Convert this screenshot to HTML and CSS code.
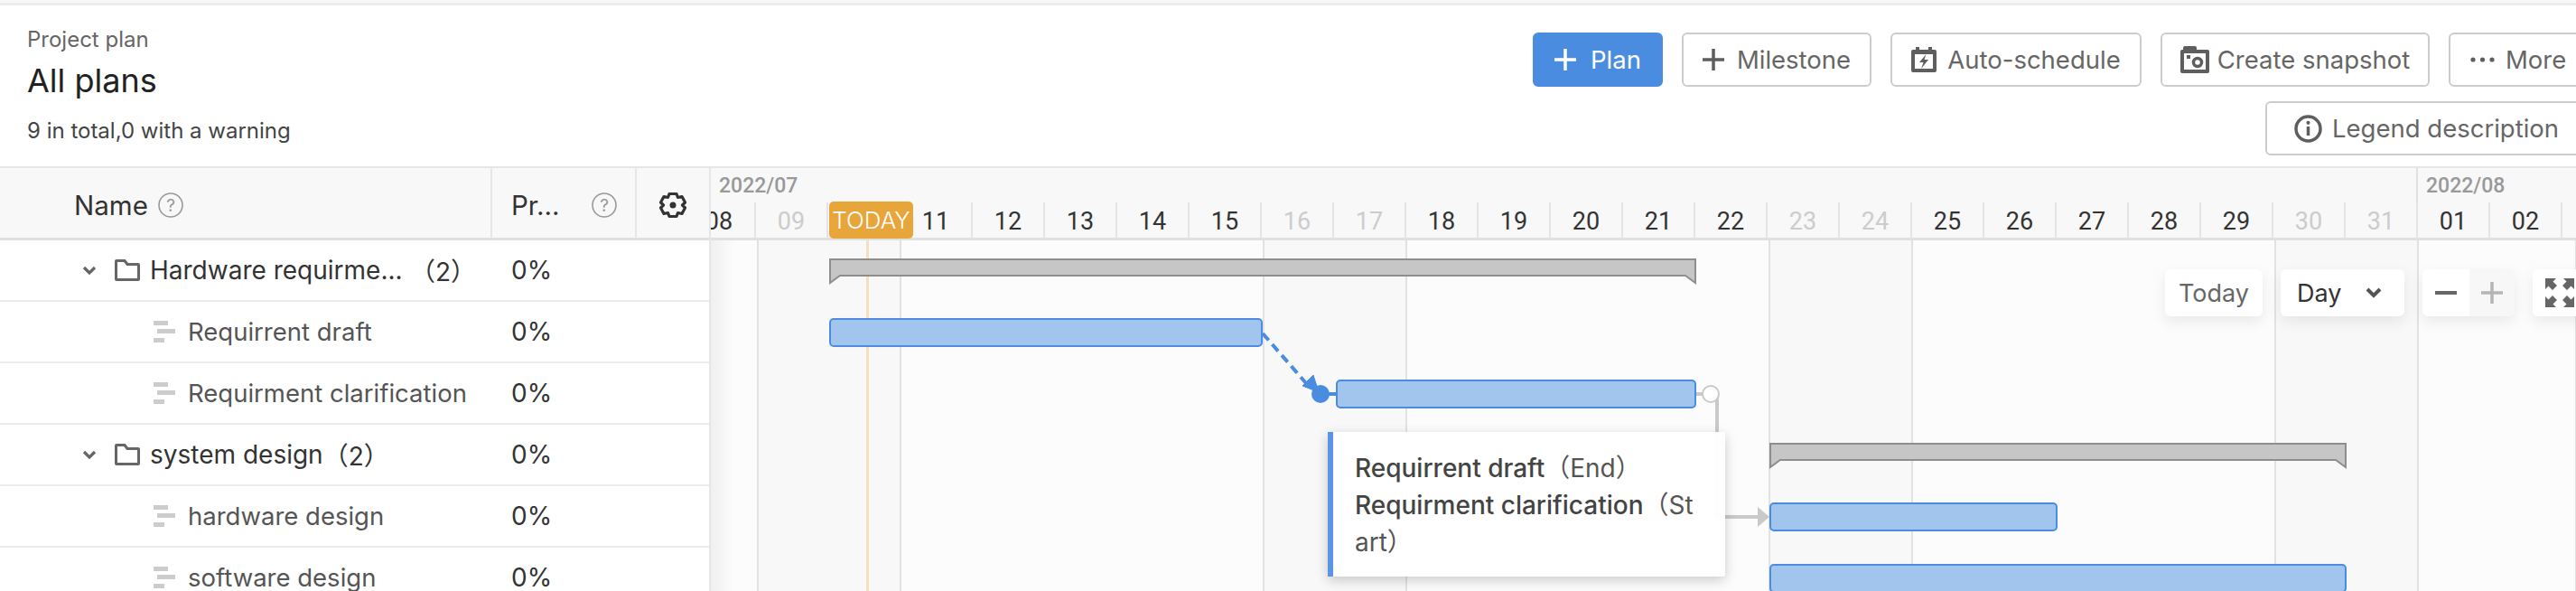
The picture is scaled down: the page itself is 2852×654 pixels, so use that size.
FILE: index.html
```html
<!DOCTYPE html>
<html lang="en">
<head>
    <meta charset="UTF-8">
    <title>Project plan</title>
    <link rel="stylesheet" href="styles.css">
</head>
<body>
    <div class="top-strip"></div>
    <div class="page-head">
        <div class="head-text">
            <div class="crumb">Project plan</div>
            <h1>All plans</h1>
            <div class="summary">9 in total,0 with a warning</div>
        </div>
        <div class="actions">
            <div class="btn-row">
                <button class="btn primary btn-plan">
                    <svg width="24" height="24" viewBox="0 0 24 24"><path d="M12 0v24M0 12h24" stroke="#fff" stroke-width="3.5" fill="none"/></svg>
                    Plan
                </button>
                <button class="btn btn-milestone">
                    <svg width="24" height="24" viewBox="0 0 24 24"><path d="M12 0v24M0 12h24" stroke="#5e5e5e" stroke-width="3.5" fill="none"/></svg>
                    Milestone
                </button>
                <button class="btn btn-auto">
                    <svg width="28" height="28" viewBox="0 0 28 28"><path d="M5 0h4v3h10V0h4v3h3a2 2 0 0 1 2 2v21a2 2 0 0 1-2 2H2a2 2 0 0 1-2-2V5a2 2 0 0 1 2-2h3zM4 8v16h20V8z" fill="#5e5e5e"/><path d="M16.500 8L9 17h4.500L11 24l8-10h-4.500z" fill="#5e5e5e"/></svg>
                    Auto-schedule
                </button>
                <button class="btn btn-snapshot">
                    <svg width="32" height="30" viewBox="0 0 32 30"><path d="M5 0h11a2 2 0 0 1 2 2v2h12a2 2 0 0 1 2 2v22a2 2 0 0 1-2 2H2a2 2 0 0 1-2-2V6a2 2 0 0 1 2-2h1V2a2 2 0 0 1 2-2zM4 8v18h24V8z" fill="#5e5e5e"/><circle cx="19" cy="18" r="4.500" fill="none" stroke="#5e5e5e" stroke-width="3.500"/><path d="M7 10h4v4H7z" fill="#5e5e5e"/></svg>
                    Create snapshot
                </button>
                <button class="btn btn-more">
                    <svg width="27" height="6" viewBox="0 0 27 6"><circle cx="3" cy="3" r="2.600" fill="#5e5e5e"/><circle cx="13.500" cy="3" r="2.600" fill="#5e5e5e"/><circle cx="24" cy="3" r="2.600" fill="#5e5e5e"/></svg>
                    More
                </button>
            </div>
            <div class="btn-row legend-row">
                <button class="btn btn-legend">
                    <svg width="31" height="31" viewBox="0 0 31 31"><circle cx="15.500" cy="15.500" r="13.500" fill="none" stroke="#5e5e5e" stroke-width="3.500"/><path d="M15.500 13v10" stroke="#5e5e5e" stroke-width="3.500"/><circle cx="15.500" cy="8.800" r="2.100" fill="#5e5e5e"/></svg>
                    Legend description
                </button>
            </div>
        </div>
    </div>

    <div class="gantt">
        <div class="task-table">
            <div class="cell head name-head">Name
                <svg class="help" width="28" height="28" viewBox="0 0 28 28"><circle cx="14" cy="14" r="13" fill="none" stroke="#999" stroke-width="1.600"/><text x="14" y="20.500" text-anchor="middle" class="help-mark">?</text></svg>
            </div>
            <div class="cell head progress-head"><span>Pr...</span>
                <svg class="help" width="28" height="28" viewBox="0 0 28 28"><circle cx="14" cy="14" r="13" fill="none" stroke="#999" stroke-width="1.600"/><text x="14" y="20.500" text-anchor="middle" class="help-mark">?</text></svg>
            </div>
            <div class="cell head gear-head">
                <svg width="30" height="30" viewBox="0 0 30 30"><path d="M11 2.500H19L20.500 6.500L25 5.500L28.500 12L25.500 15L28.500 18L25 24.500L20.500 23.500L19 27.500H11L9.500 23.500L5 24.500L1.500 18L4.500 15L1.500 12L5 5.500L9.500 6.500Z" fill="none" stroke="#333" stroke-width="3.200" stroke-linejoin="round"/><circle cx="15" cy="15" r="3.500" fill="#333"/></svg>
            </div>

            <div class="cell name group">
                <svg class="chevron" width="16" height="10" viewBox="0 0 16 10"><path d="M2 2l6 6 6-6" fill="none" stroke="#666" stroke-width="3.200"/></svg>
                <svg class="folder" width="28" height="24" viewBox="0 0 28 24"><path d="M1.500 2a.5.500 0 0 1 .5-.5h9l3 4h12a.5.500 0 0 1 .5.500v16a.5.500 0 0 1-.5.500H2a.5.500 0 0 1-.5-.5z" fill="none" stroke="#666" stroke-width="3"/></svg>
                <span class="group-name clipped">Hardware requirme...</span><span class="count">（2）</span>
            </div>
            <div class="cell pct">0%</div><div class="cell"></div>

            <div class="cell name task">
                <svg class="task-icon" width="24" height="24" viewBox="0 0 24 24"><path d="M0 0h16v5H0zM4 9h20v5H4zM0 19h12v5H0z" fill="#ccc"/></svg>
                Requirrent draft
            </div>
            <div class="cell pct">0%</div><div class="cell"></div>

            <div class="cell name task">
                <svg class="task-icon" width="24" height="24" viewBox="0 0 24 24"><path d="M0 0h16v5H0zM4 9h20v5H4zM0 19h12v5H0z" fill="#ccc"/></svg>
                Requirment clarification
            </div>
            <div class="cell pct">0%</div><div class="cell"></div>

            <div class="cell name group">
                <svg class="chevron" width="16" height="10" viewBox="0 0 16 10"><path d="M2 2l6 6 6-6" fill="none" stroke="#666" stroke-width="3.200"/></svg>
                <svg class="folder" width="28" height="24" viewBox="0 0 28 24"><path d="M1.500 2a.5.500 0 0 1 .5-.5h9l3 4h12a.5.500 0 0 1 .5.500v16a.5.500 0 0 1-.5.500H2a.5.500 0 0 1-.5-.5z" fill="none" stroke="#666" stroke-width="3"/></svg>
                <span class="group-name">system design</span><span class="count">（2）</span>
            </div>
            <div class="cell pct">0%</div><div class="cell"></div>

            <div class="cell name task">
                <svg class="task-icon" width="24" height="24" viewBox="0 0 24 24"><path d="M0 0h16v5H0zM4 9h20v5H4zM0 19h12v5H0z" fill="#ccc"/></svg>
                hardware design
            </div>
            <div class="cell pct">0%</div><div class="cell"></div>

            <div class="cell name task">
                <svg class="task-icon" width="24" height="24" viewBox="0 0 24 24"><path d="M0 0h16v5H0zM4 9h20v5H4zM0 19h12v5H0z" fill="#ccc"/></svg>
                software design
            </div>
            <div class="cell pct">0%</div><div class="cell"></div>
        </div>

        <div class="timeline">
            <div class="time-head">
                <div class="months">
                    <div class="month month-jul">2022/07</div>
                    <div class="month">2022/08</div>
                </div>
                <div class="days">
                    <div class="day">08</div>
                    <div class="day off">09</div>
                    <div class="day off"></div>
                    <div class="day">11</div>
                    <div class="day">12</div>
                    <div class="day">13</div>
                    <div class="day">14</div>
                    <div class="day">15</div>
                    <div class="day off">16</div>
                    <div class="day off">17</div>
                    <div class="day">18</div>
                    <div class="day">19</div>
                    <div class="day">20</div>
                    <div class="day">21</div>
                    <div class="day">22</div>
                    <div class="day off">23</div>
                    <div class="day off">24</div>
                    <div class="day">25</div>
                    <div class="day">26</div>
                    <div class="day">27</div>
                    <div class="day">28</div>
                    <div class="day">29</div>
                    <div class="day off">30</div>
                    <div class="day off">31</div>
                    <div class="day">01</div>
                    <div class="day">02</div>
                    <div class="day"></div>
                </div>
                <div class="today-badge">TODAY</div>
            </div>

            <div class="chart">
                <div class="bands">
                    <div class="band" style="width: 53px"></div>
                    <div class="band off" style="width: 158px"></div>
                    <div class="band" style="width: 402px"></div>
                    <div class="band off" style="width: 158px"></div>
                    <div class="band" style="width: 402px"></div>
                    <div class="band off" style="width: 158px"></div>
                    <div class="band" style="width: 402px"></div>
                    <div class="band off" style="width: 158px"></div>
                    <div class="band" style="width: 175px"></div>
                </div>
                <div class="today-line"></div>

                <!-- page coordinates, chart starts at 787,266 -->
                <svg class="links" width="2065" height="388" viewBox="787 266 2065 388">
                    <path d="M919 287H1877V313L1866 305H930L919 313Z" fill="#c6c6c6" stroke="#8e8e8e" stroke-width="2"/>
                    <path d="M1960 491H2597V517L2586 509H1971L1960 517Z" fill="#c6c6c6" stroke="#8e8e8e" stroke-width="2"/>
                    <path d="M1398 369L1446 424" stroke="#4a8de0" stroke-width="4" stroke-dasharray="10 6" fill="none"/>
                    <path d="M1454 415L1442 427L1460 434Z" fill="#4a8de0" stroke="#4a8de0" stroke-width="1"/>
                    <path d="M1462 436H1480" stroke="#4a8de0" stroke-width="4"/>
                    <circle cx="1462" cy="436" r="10" fill="#4a8de0"/>
                    <path d="M1878 436H1901V572H1947" stroke="#c9c9c9" stroke-width="4" fill="none"/>
                    <path d="M1946 561L1959 572L1946 583Z" fill="#c9c9c9"/>
                    <circle cx="1894" cy="436" r="9" fill="#fff" stroke="#c9c9c9" stroke-width="2"/>
                </svg>

                <div class="bar" style="left: 131px; top: 86px; width: 480px"></div>
                <div class="bar" style="left: 692px; top: 154px; width: 399px"></div>
                <div class="bar" style="left: 1172px; top: 290px; width: 319px"></div>
                <div class="bar" style="left: 1172px; top: 358px; width: 639px"></div>

                <div class="tip">
                    <b>Requirrent draft</b>（End）<br>
                    <b>Requirment clarification</b>（Start）
                </div>

                <div class="controls">
                    <div class="ctl today-btn">Today</div>
                    <div class="ctl day-select">Day
                        <svg width="18" height="12" viewBox="0 0 18 12"><path d="M2 2l7 7 7-7" fill="none" stroke="#555" stroke-width="4"/></svg>
                    </div>
                    <div class="ctl zoom-group">
                        <div class="zoom-out"><svg width="24" height="4" viewBox="0 0 24 4"><path d="M0 0h24v4H0z" fill="#666"/></svg></div>
                        <div class="zoom-in"><svg width="24" height="24" viewBox="0 0 24 24"><path d="M12 0v24M0 12h24" stroke="#b5b5b5" stroke-width="3.500"/></svg></div>
                    </div>
                    <div class="ctl expand">
                        <svg width="32" height="32" viewBox="0 0 32 32"><path d="M0 0h12L8.500 3.500 13 8 8 13 3.500 8.500 0 12zM32 0H20l3.500 3.500L19 8l5 5 4.500-4.500L32 12zM0 32V20l3.500 3.500L8 19l5 5-4.500 4.500L12 32zM32 32H20l3.500-3.500L19 24l5-5 4.500 4.500L32 20z" fill="#666"/></svg>
                    </div>
                </div>
            </div>
        </div>
    </div>
</body>
</html>
```

FILE: styles.css
```css
html, body {
    margin: 0;
    height: 654px;
    overflow: hidden;
}
body {
    font-family: Inter, "Noto Sans CJK SC", sans-serif;
    background-color: #fff;
    color: #333;
}
.top-strip {
    height: 3px;
    background-color: #f7f7f7;
    border-bottom: 3px solid #ececec;
}

/* header */
.page-head {
    height: 178px;
    display: flex;
    justify-content: space-between;
    border-bottom: 2px solid #e6e6e6;
}
.head-text {
    padding: 23px 0 0 30px;
}
.crumb {
    font-size: 24px;
    line-height: 30px;
    color: #666;
}
h1 {
    margin: 8px 0 0;
    font-size: 36px;
    line-height: 44px;
    font-weight: 400;
    color: #222;
}
.summary {
    margin-top: 18px;
    font-size: 24px;
    line-height: 32px;
    color: #444;
}
.actions {
    width: 1155px;
    flex: none;
    padding-top: 30px;
    display: flex;
    flex-direction: column;
    gap: 16px;
}
.btn-row {
    display: flex;
    gap: 21px;
}
.legend-row {
    margin-left: 811px;
}
.btn {
    height: 60px;
    padding: 0;
    display: flex;
    align-items: center;
    justify-content: center;
    gap: 12px;
    flex: none;
    font-family: inherit;
    font-size: 27.5px;
    color: #666;
    background: #fff;
    border: 2px solid #ccc;
    border-radius: 6px;
}
.btn.primary {
    color: #fff;
    background-color: #4a8de0;
    border-color: #4a8de0;
}
.btn-plan {
    width: 144px;
    gap: 16px;
}
.btn-milestone {
    width: 210px;
    gap: 14px;
}
.btn-auto {
    width: 278px;
}
.btn-snapshot {
    width: 298px;
    gap: 9px;
}
.btn-more {
    width: 180px;
    justify-content: flex-start;
    padding-left: 22px;
}
.btn-legend {
    width: 380px;
    justify-content: flex-start;
    padding-left: 30px;
    gap: 11px;
}

/* left table */
.gantt {
    display: flex;
    height: 468px;
}
.task-table {
    width: 785px;
    flex: none;
    display: grid;
    grid-template-columns: 545px 160px 80px;
    grid-auto-rows: 68px;
    grid-template-rows: 80px;
    border-right: 2px solid #e6e6e6;
}
.cell {
    display: flex;
    align-items: center;
    font-size: 27.5px;
    color: #333;
    border-bottom: 2px solid #ececec;
    white-space: nowrap;
}
.head {
    padding-top: 4px;
    font-size: 29.5px;
    background-color: #f8f8f8;
    border-bottom: 3px solid #e0e0e0;
    border-right: 2px solid #e6e6e6;
}
.gear-head {
    border-right: none;
    justify-content: center;
}
.name-head {
    padding-left: 82px;
    gap: 11px;
}
.progress-head {
    padding-left: 21px;
    justify-content: space-between;
    padding-right: 20px;
}
.help-mark {
    font-size: 19px;
    fill: #999;
}
.pct {
    padding-left: 21px;
    font-size: 28px;
}
.group {
    padding-left: 91px;
    font-size: 28px;
    color: #333;
}
.chevron {
    flex: none;
    margin-right: 20px;
}
.folder {
    flex: none;
    margin-right: 11px;
}
.clipped {
    width: 288px;
}
.task {
    padding-left: 170px;
    color: #555;
}
.task-icon {
    flex: none;
    margin-right: 14px;
}

/* timeline */
.timeline {
    flex: 1;
    min-width: 0;
    overflow: hidden;
}
.time-head {
    position: relative;
    height: 80px;
    box-sizing: border-box;
    background-color: #f8f8f8;
    border-bottom: 3px solid #e0e0e0;
}
.months {
    height: 38px;
    display: flex;
}
.month {
    padding: 6px 0 0 9px;
    font-family: Roboto, sans-serif;
    font-size: 23px;
    font-weight: 500;
    color: #999;
    box-sizing: border-box;
}
.month-jul {
    width: 1890px;
    border-right: 2px solid #e0e0e0;
}
.days {
    display: flex;
    height: 39px;
    margin-left: -30px;
}
.day {
    width: 80px;
    flex: none;
    box-sizing: border-box;
    border-right: 2px solid #e4e4e4;
    text-align: center;
    font-family: Roboto, sans-serif;
    font-size: 27px;
    line-height: 42px;
    color: #333;
}
.day.off {
    color: #ccc;
}
.today-badge {
    position: absolute;
    left: 131px;
    top: 37px;
    width: 93px;
    height: 41px;
    line-height: 41px;
    text-align: center;
    font-size: 26px;
    font-weight: 300;
    color: #fff;
    background-color: #e8a53a;
    border-radius: 5px;
}
.chart {
    position: relative;
    height: 388px;
}
.bands {
    display: flex;
    height: 100%;
}
.band {
    flex: none;
    box-sizing: border-box;
    background-color: #fcfcfc;
    border-right: 2px solid #e2e2e2;
}
.band.off {
    background-color: #f8f8f8;
}
.chart::before {
    content: "";
    position: absolute;
    left: 0;
    top: 0;
    bottom: 0;
    width: 26px;
    background: linear-gradient(to right, rgba(0, 0, 0, 0.05), rgba(0, 0, 0, 0));
}
.today-line {
    position: absolute;
    left: 172px;
    top: 0;
    bottom: 0;
    width: 3px;
    background-color: #f5e0bd;
}
.links {
    position: absolute;
    left: 0;
    top: 0;
}
.bar {
    position: absolute;
    height: 32px;
    box-sizing: border-box;
    background-color: #a2c5ee;
    border: 2px solid #4a8de0;
    border-radius: 5px;
}
.tip {
    position: absolute;
    left: 683px;
    top: 212px;
    width: 440px;
    height: 160px;
    box-sizing: border-box;
    padding: 20px 24px 0 24px;
    font-size: 28px;
    line-height: 41px;
    color: #555;
    word-break: break-all;
    background-color: rgba(255, 255, 255, 0.96);
    border-left: 6px solid #5b95e3;
    border-radius: 0 3px 3px 0;
    box-shadow: 0 4px 14px rgba(0, 0, 0, 0.2);
}
.tip b {
    font-weight: 500;
    color: #444;
}
.controls {
    position: absolute;
    left: 1610px;
    top: 32px;
    display: flex;
    gap: 20px;
}
.ctl {
    height: 52px;
    display: flex;
    align-items: center;
    flex: none;
    background-color: #fff;
    border-radius: 6px;
    box-shadow: 0 6px 16px rgba(0, 0, 0, 0.08);
    font-size: 27px;
    color: #666;
}
.today-btn {
    width: 108px;
    justify-content: center;
}
.day-select {
    width: 137px;
    padding: 0 25px 0 18px;
    box-sizing: border-box;
    justify-content: space-between;
    color: #333;
}
.zoom-group {
    width: 102px;
    overflow: hidden;
}
.zoom-out, .zoom-in {
    height: 100%;
    display: flex;
    align-items: center;
    justify-content: center;
}
.zoom-out {
    width: 52px;
}
.zoom-in {
    width: 50px;
    background-color: #f7f7f7;
}
.expand {
    width: 80px;
    padding-left: 14px;
    box-sizing: border-box;
}
```
